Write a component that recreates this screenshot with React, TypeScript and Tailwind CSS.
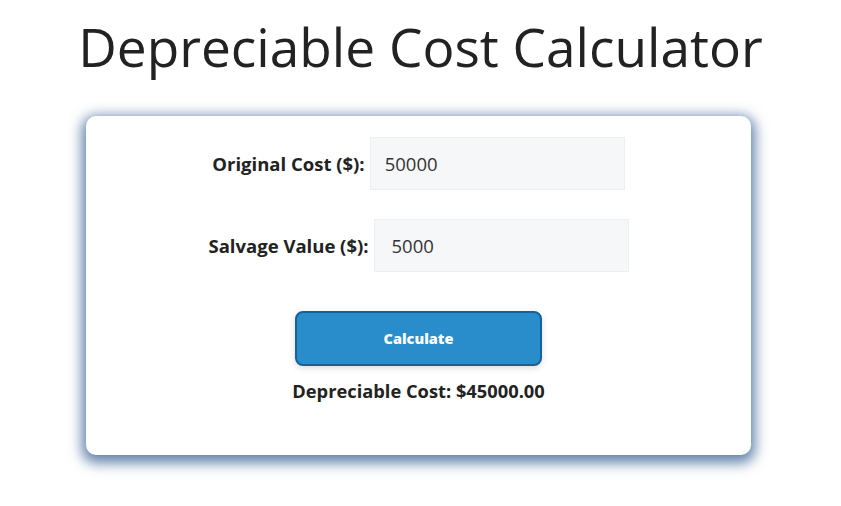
export default function App() {
  return (
    <div className="min-h-[506px] w-full bg-white flex flex-col items-center" style={{ fontFamily: '"Open Sans", "Noto Sans", sans-serif' }}>
      <h1 className="mt-[11px] text-[53.2px] leading-[72px] text-[#222] font-normal">Depreciable Cost Calculator</h1>
      <div className="mt-[33px] ml-[-4px] w-[665px] h-[339px] bg-white rounded-[10px] shadow-[0_4px_13px_4px_rgba(60,100,150,0.8)] flex flex-col items-center pt-[21px]">
        <div className="flex items-center gap-[5px]">
          <label className="text-[18.5px] font-bold text-[#222]">Original Cost ($):</label>
          <input readOnly value="50000" className="w-[255px] h-[53px] bg-[#f6f7f9] border border-[#eeeff1] pl-[14px] text-[18.5px] text-[#333] outline-none" />
        </div>
        <div className="flex items-center gap-[5px] mt-[29px]">
          <label className="text-[18.5px] font-bold text-[#222]">Salvage Value ($):</label>
          <input readOnly value="5000" className="w-[255px] h-[53px] bg-[#f6f7f9] border border-[#eeeff1] pl-[17px] text-[18.5px] text-[#333] outline-none" />
        </div>
        <button className="mt-[39px] w-[247px] h-[55px] rounded-[8px] bg-[#2a8dcb] border-2 border-[#17609e] text-white text-[14.5px] font-extrabold shadow-[0_2px_6px_rgba(0,0,0,0.15)]">Calculate</button>
        <div className="mt-[11px] text-[18.3px] font-bold text-[#222]">Depreciable Cost: $45000.00</div>
      </div>
    </div>
  );
}
